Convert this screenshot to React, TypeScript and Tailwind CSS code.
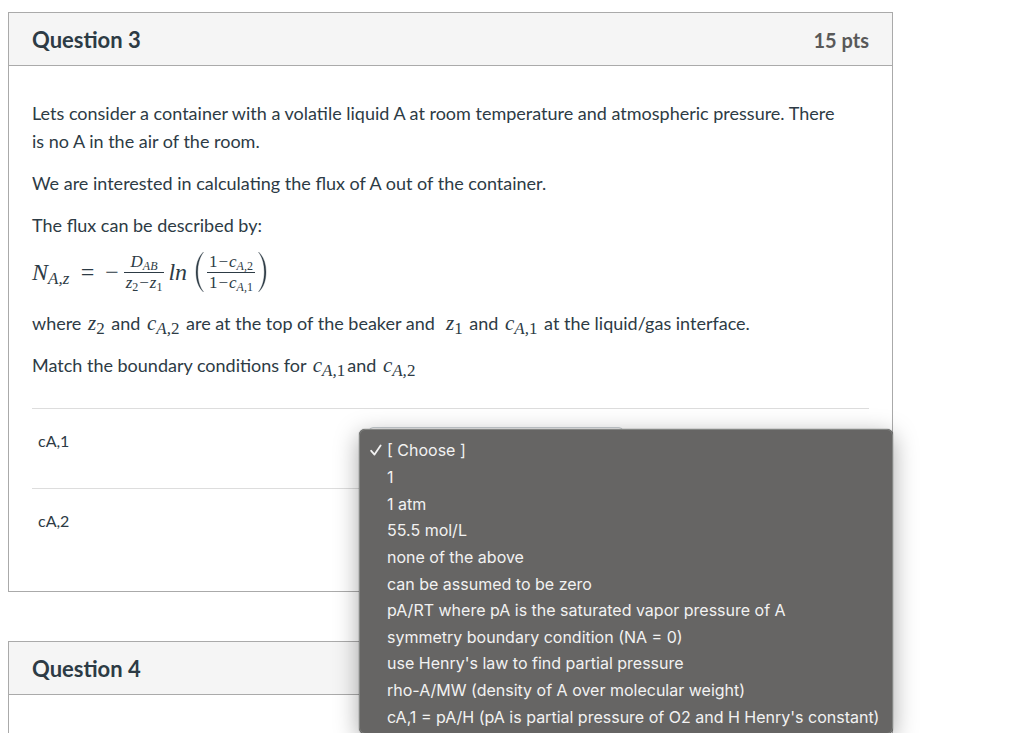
import { useState } from "react";
import type { ReactNode } from "react";

const choices = [
  "[ Choose ]",
  "1",
  "1 atm",
  "55.5 mol/L",
  "none of the above",
  "can be assumed to be zero",
  "pA/RT where pA is the saturated vapor pressure of A",
  "symmetry boundary condition (NA = 0)",
  "use Henry's law to find partial pressure",
  "rho-A/MW (density of A over molecular weight)",
  "cA,1 = pA/H (pA is partial pressure of O2 and H Henry's constant)",
];

const math = "font-['Liberation_Serif',serif] italic";

function Sub({ children, small }: { children: ReactNode; small?: boolean }) {
  return (
    <sub className={small ? "text-[12px] bottom-[-3px]" : "text-[17px] bottom-[-4px]"}>
      {children}
    </sub>
  );
}

// digits stay upright in math, letters are italic
function Num({ children }: { children: ReactNode }) {
  return <span className="not-italic">{children}</span>;
}

function Sym({ base, sub }: { base: string; sub: ReactNode }) {
  return (
    <span className={`${math} mx-0.5 text-[21px] leading-none`}>
      {base}
      <Sub>{sub}</Sub>
    </span>
  );
}

function Fraction({ top, bottom }: { top: ReactNode; bottom: ReactNode }) {
  return (
    <span className="inline-flex flex-col text-center text-[17px] leading-5">
      <span className="h-[21px] px-0.5 border-b border-[#2d3b45]">{top}</span>
      <span className="h-5 px-0.5">{bottom}</span>
    </span>
  );
}

function Paren({ flip }: { flip?: boolean }) {
  return (
    <svg viewBox="0 0 9 42" className={flip ? "w-[9px] h-[42px] -scale-x-100" : "w-[9px] h-[42px]"}>
      <path
        d="M8.5 1C3.5 5.5 1 12.5 1 21s2.5 15.500 7.500 20C4.800 36 2.700 29.500 2.700 21S4.800 6 8.500 1z"
        fill="#2d3b45"
        stroke="#2d3b45"
        strokeWidth="0.3"
      />
    </svg>
  );
}

function Formula() {
  return (
    <div className={`${math} flex items-center h-[42px] mb-4 text-[24px] leading-6`}>
      <span className="h-6">
        N<Sub>A,z</Sub>
      </span>
      <span className="h-6 ml-2.5">=</span>
      <span className="h-6 ml-2">−</span>
      <span className="flex ml-1">
        <Fraction
          top={<>D<Sub small>AB</Sub></>}
          bottom={<>z<Sub small><Num>2</Num></Sub>−z<Sub small><Num>1</Num></Sub></>}
        />
      </span>
      <span className="h-6 ml-1">ln</span>
      <span className="flex items-center gap-[3px] ml-2">
        <Paren />
        <Fraction
          top={<><Num>1</Num>−c<Sub small>A,<Num>2</Num></Sub></>}
          bottom={<><Num>1</Num>−c<Sub small>A,<Num>1</Num></Sub></>}
        />
        <Paren flip />
      </span>
    </div>
  );
}

function QuestionHeader({ title, points }: { title: string; points?: string }) {
  return (
    <header className="flex items-baseline justify-between h-[53px] pt-[13px] px-[23px] bg-[#f5f5f5] border-b border-[#aaaaaa] font-bold">
      <h2 className="text-[22px]">{title}</h2>
      {points && <span className="text-[20px] text-[#595959]">{points}</span>}
    </header>
  );
}

function ChoiceMenu({ value, onPick }: { value: string; onPick: (v: string) => void }) {
  return (
    <div
      role="listbox"
      className="absolute top-[2px] -left-2.5 z-10 grid auto-rows-fr w-[534px] h-[305px] pt-[7px] pb-[3px] rounded-md border border-[#848684] bg-[#666564] font-[Inter,sans-serif] text-[16px] text-[#f2f2f2] shadow-[0_6px_24px_rgba(0,0,0,0.35),0_0_1px_#000]"
    >
      {choices.map((c) => (
        <button
          key={c}
          role="option"
          aria-selected={c === value}
          onClick={() => onPick(c)}
          className="flex items-center pl-2.5 text-left whitespace-nowrap"
        >
          <span className="w-[17px] shrink-0">
            {c === value && (
              <svg viewBox="0 0 12 12" fill="none" stroke="currentColor" strokeWidth="1.8" className="w-3 h-3">
                <path d="M1.200 6.800L4.500 10.600L10.600 1.400" strokeLinecap="round" strokeLinejoin="round" />
              </svg>
            )}
          </span>
          {c}
        </button>
      ))}
    </div>
  );
}

function MatchRow({ label, open }: { label: string; open?: boolean }) {
  const [value, setValue] = useState(choices[0]);
  return (
    <div className="flex h-20 border-t border-[#dddddd] pl-1.5">
      <label htmlFor={label} className="w-[331px] pt-5 text-[16px] leading-6">
        {label}
      </label>
      <div className="relative mt-[18px] w-[254px] h-[38px]">
        <select
          id={label}
          value={value}
          onChange={(e) => setValue(e.target.value)}
          className="w-full h-full px-2 rounded border border-[#c7cdd1] bg-white text-[16px]"
        >
          {choices.map((c) => (
            <option key={c}>{c}</option>
          ))}
        </select>
        {open && <ChoiceMenu value={value} onPick={setValue} />}
      </div>
    </div>
  );
}

export default function App() {
  return (
    <main className="flex flex-col h-screen overflow-hidden pt-3 pl-2 bg-white font-[Lato,sans-serif] text-[18px] leading-7 text-[#2d3b45]">
      <section className="shrink-0 w-full max-w-[885px] pb-[23px] border border-[#aaaaaa]">
        <QuestionHeader title="Question 3" points="15 pts" />
        <div className="px-[23px] pt-[33px]">
          <p className="mb-3.5 pr-6">
            Lets consider a container with a volatile liquid A at room temperature and atmospheric
            pressure. There is no A in the air of the room.
          </p>
          <p className="mb-3.5">We are interested in calculating the flux of A out of the container.</p>
          <p className="mb-3">The flux can be described by:</p>
          <Formula />
          <p className="mb-3.5">
            where <Sym base="z" sub={<Num>2</Num>} /> and{" "}
            <Sym base="c" sub={<>A,<Num>2</Num></>} /> are at the top of the beaker and&nbsp;{" "}
            <Sym base="z" sub={<Num>1</Num>} /> and <Sym base="c" sub={<>A,<Num>1</Num></>} /> at
            the liquid/gas interface.
          </p>
          <p className="mb-[29px]">
            Match the boundary conditions for <Sym base="c" sub={<>A,<Num>1</Num></>} />
            and <Sym base="c" sub={<>A,<Num>2</Num></>} />
          </p>
          <MatchRow label="cA,1" open />
          <MatchRow label="cA,2" />
        </div>
      </section>

      <section className="flex-1 w-full max-w-[885px] mt-[49px] border border-b-0 border-[#aaaaaa]">
        <QuestionHeader title="Question 4" />
      </section>
    </main>
  );
}
